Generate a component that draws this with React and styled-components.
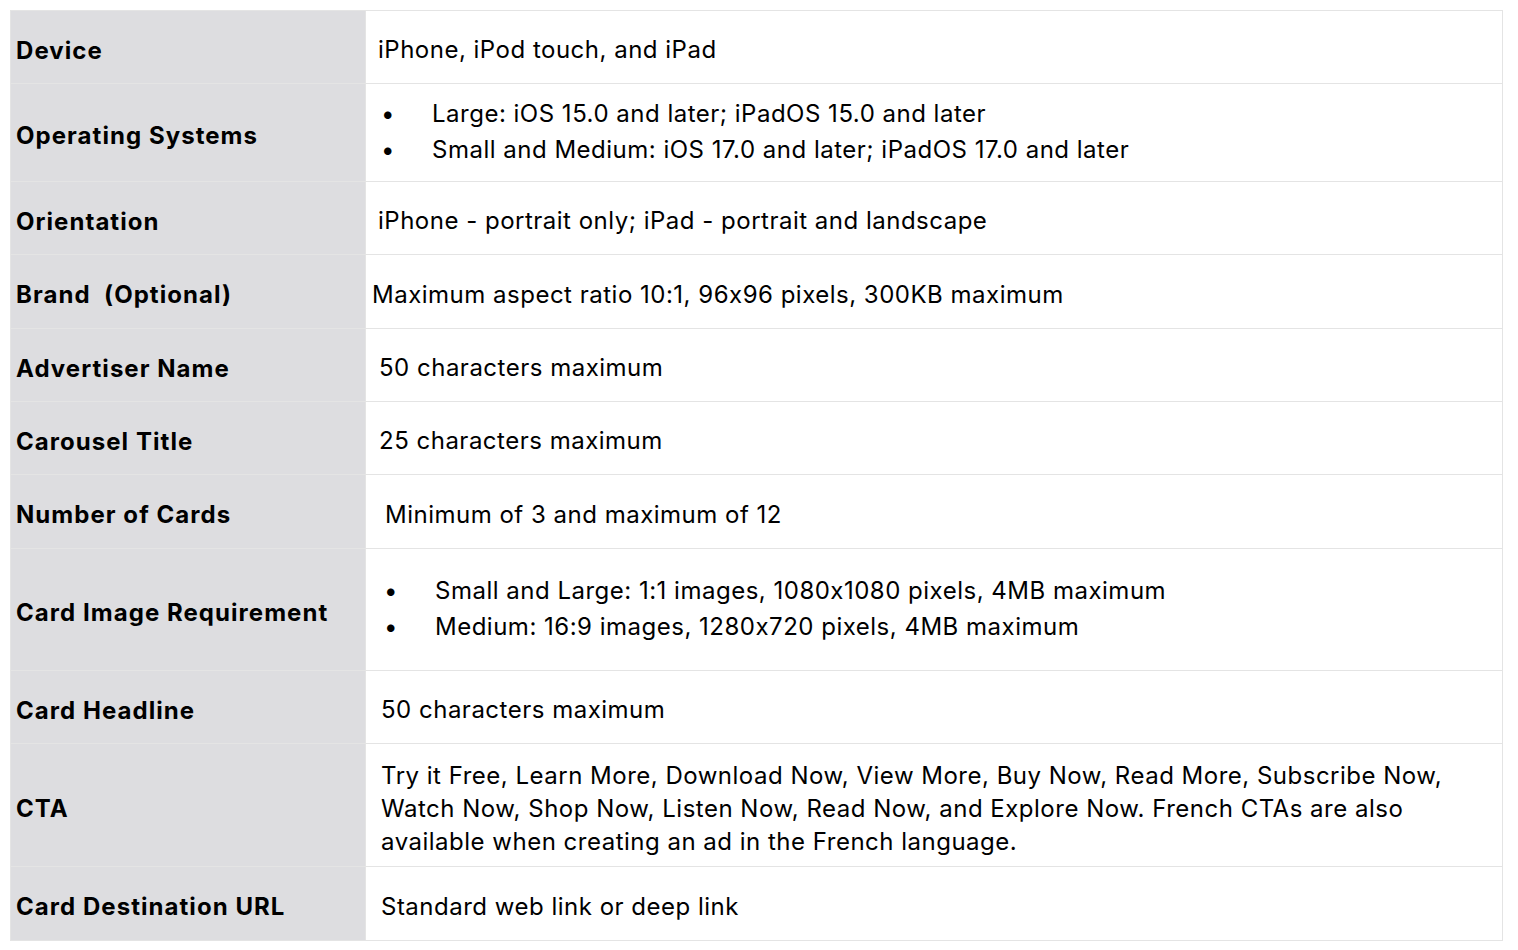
import React from 'react'
import styled, { createGlobalStyle } from 'styled-components'

const GlobalStyle = createGlobalStyle`
  body {
    margin: 0;
    background: #ffffff;
    font-family: Inter, "Noto Sans", "Liberation Sans", sans-serif;
    color: #000;
  }
`

const rows = [
  { label: 'Device', h: 73, indent: 12, text: 'iPhone, iPod touch, and iPad' },
  {
    label: 'Operating Systems',
    h: 98,
    indent: 12,
    bullets: ['Large: iOS 15.0 and later; iPadOS 15.0 and later', 'Small and Medium: iOS 17.0 and later; iPadOS 17.0 and later'],
  },
  { label: 'Orientation', h: 73, indent: 12, text: 'iPhone - portrait only; iPad - portrait and landscape' },
  { label: 'Brand  (Optional)', h: 74, indent: 6, text: 'Maximum aspect ratio 10:1, 96x96 pixels, 300KB maximum' },
  { label: 'Advertiser Name', h: 73, indent: 13, text: '50 characters maximum' },
  { label: 'Carousel Title', h: 73, indent: 13, text: '25 characters maximum' },
  { label: 'Number of Cards', h: 74, indent: 19, text: 'Minimum of 3 and maximum of 12' },
  {
    label: 'Card Image Requirement',
    h: 122,
    indent: 15,
    bullets: ['Small and Large: 1:1 images, 1080x1080 pixels, 4MB maximum', 'Medium: 16:9 images, 1280x720 pixels, 4MB maximum'],
  },
  { label: 'Card Headline', h: 73, indent: 15, text: '50 characters maximum' },
  {
    label: 'CTA',
    h: 123,
    indent: 15,
    lh: 33,
    text: 'Try it Free, Learn More, Download Now, View More, Buy Now, Read More, Subscribe Now, Watch Now, Shop Now, Listen Now, Read Now, and Explore Now. French CTAs are also available when creating an ad in the French language.',
  },
  { label: 'Card Destination URL', h: 74, indent: 15, text: 'Standard web link or deep link' },
]

const App = () => {
  return (
    <>
      <GlobalStyle />
      <Page>
        <Table>
          <tbody>
            {rows.map((r) => (
              <Row key={r.label} $h={r.h}>
                <Label>{r.label}</Label>
                <Value $indent={r.indent} $lh={r.lh}>
                  {r.bullets ? (
                    <List>
                      {r.bullets.map((b) => (
                        <Item key={b}>
                          <Bullet>•</Bullet>
                          <span>{b}</span>
                        </Item>
                      ))}
                    </List>
                  ) : (
                    r.text
                  )}
                </Value>
              </Row>
            ))}
          </tbody>
        </Table>
      </Page>
    </>
  )
}

export default App

const Page = styled.div`
  padding: 10px 16px 0 10px;
`

const Table = styled.table`
  width: 1493px;
  border-collapse: collapse;
  table-layout: fixed;
  border: 1px solid #e4e4e4;
`

const Row = styled.tr`
  height: ${(p) => p.$h}px;
`

const Label = styled.td`
  width: 355px;
  box-sizing: border-box;
  background: #dddde0;
  border: 1px solid #e4e4e4;
  padding: 6px 0 0 5px;
  font-size: 24px;
  font-weight: 700;
  letter-spacing: 1.05px;
  vertical-align: middle;
  white-space: pre;
`

const Value = styled.td`
  box-sizing: border-box;
  border: 1px solid #e4e4e4;
  padding: 6px 36px 0 ${(p) => p.$indent}px;
  font-size: 24px;
  line-height: ${(p) => (p.$lh ? `${p.$lh}px` : '1.3')};
  letter-spacing: 0.5px;
  vertical-align: middle;
`

const List = styled.div`
  display: flex;
  flex-direction: column;
  line-height: 36px;
  margin-top: -7px;
`

const Item = styled.div`
  display: flex;
`

const Bullet = styled.span`
  width: 54px;
  flex-shrink: 0;
  padding-left: 3px;
  box-sizing: border-box;
`
